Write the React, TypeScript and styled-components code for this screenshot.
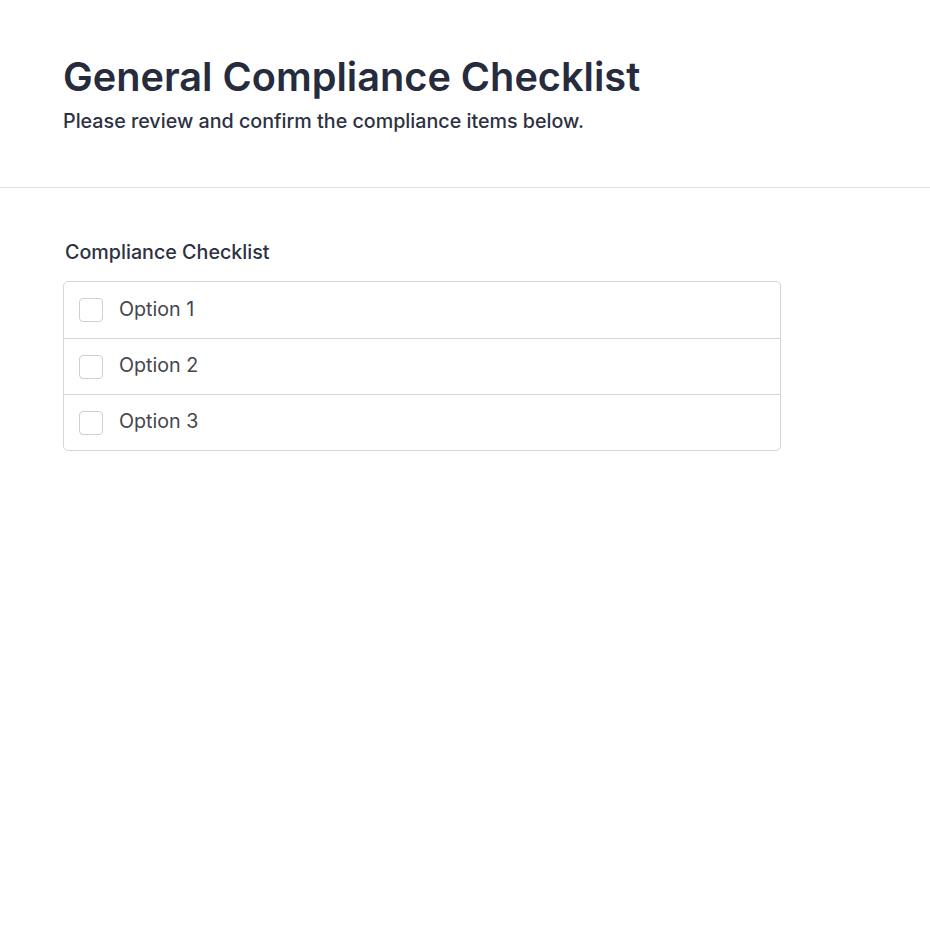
import React from "react";
import styled, { createGlobalStyle } from "styled-components";

const GlobalStyle = createGlobalStyle`
  body {
    margin: 0;
    background: #ffffff;
    font-family: Inter, "Noto Sans", sans-serif;
  }
`;

const Page = styled.div`
  min-height: 100vh;
  background: #ffffff;
`;

const Header = styled.header`
  padding: 53px 63px 54px;
  border-bottom: 1px solid #e3e3e6;
`;

const Title = styled.h1`
  margin: 0;
  font-size: 39.7px;
  font-weight: 600;
  line-height: 48px;
  color: #262b3d;
`;

const Subtitle = styled.p`
  margin: 8px 0 0;
  font-size: 19.7px;
  font-weight: 500;
  line-height: 24px;
  color: #2d3142;
`;

const Content = styled.main`
  padding: 52px 63px;
  max-width: 718px;
`;

const GroupLabel = styled.div`
  margin: 0 0 17px 2px;
  font-size: 19.7px;
  font-weight: 500;
  line-height: 24px;
  color: #2d3142;
`;

const List = styled.div`
  border: 1px solid #d6d6d9;
  border-radius: 5px;
  overflow: hidden;
`;

const Row = styled.label`
  display: flex;
  align-items: center;
  gap: 16px;
  height: 56px;
  padding: 0 15px;
  box-sizing: border-box;
  cursor: pointer;

  & + & {
    border-top: 1px solid #d6d6d9;
  }
`;

const Box = styled.input.attrs({ type: "checkbox" })`
  appearance: none;
  margin: 0;
  width: 24px;
  height: 24px;
  border: 1px solid #cfcfd3;
  border-radius: 4px;
  background: #ffffff;
  flex-shrink: 0;
`;

const OptionText = styled.span`
  padding-bottom: 3px;
  font-size: 19.7px;
  font-weight: 400;
  color: #45464f;
`;

const options = ["Option 1", "Option 2", "Option 3"];

const App: React.FC = () => {
  return (
    <Page>
      <GlobalStyle />
      <Header>
        <Title>General Compliance Checklist</Title>
        <Subtitle>Please review and confirm the compliance items below.</Subtitle>
      </Header>
      <Content>
        <GroupLabel>Compliance Checklist</GroupLabel>
        <List>
          {options.map((o) => (
            <Row key={o}>
              <Box />
              <OptionText>{o}</OptionText>
            </Row>
          ))}
        </List>
      </Content>
    </Page>
  );
};

export default App;
